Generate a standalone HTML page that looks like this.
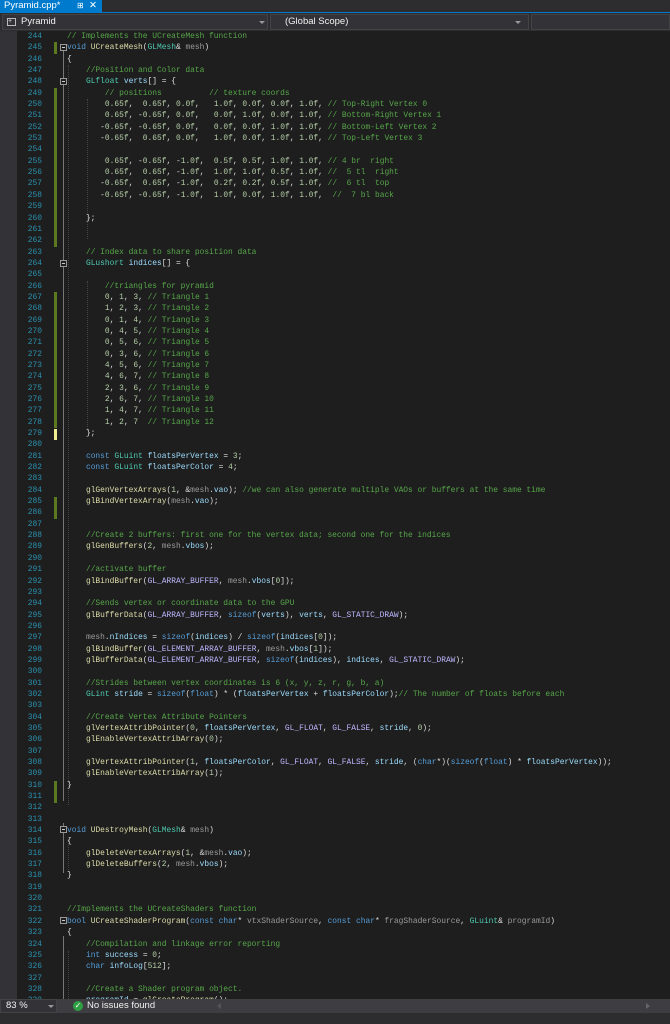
<!DOCTYPE html>
<html><head><meta charset="utf-8">
<style>
*{margin:0;padding:0;box-sizing:border-box}
body{width:670px;height:1024px;overflow:hidden;background:#1e1e1e;font-family:"Liberation Sans",sans-serif;position:relative}
#tabbar{position:absolute;left:0;top:0;width:670px;height:12px;background:#2d2d30}
#tab{position:absolute;left:0;top:0;width:102px;height:12px;background:#007acc;color:#fff;font-size:9.5px;line-height:12px;padding-left:4px}
#tab span{position:absolute;top:0}
#blue{position:absolute;left:0;top:12px;width:670px;height:1px;background:#007acc}
#nav{position:absolute;left:0;top:13px;width:670px;height:18px;background:#2d2d30}
.dd{position:absolute;top:1px;height:16px;background:#333337;border:1px solid #434346;color:#f1f1f1;font-size:9.5px;line-height:14px}
.arr{position:absolute;top:6px;width:0;height:0;border-left:3px solid transparent;border-right:3px solid transparent;border-top:3px solid #999}
#gut{position:absolute;left:0;top:31px;width:17px;height:968px;background:#333337}
#code{position:absolute;left:0;top:31px;width:670px;height:968px;overflow:hidden;font-family:"Liberation Mono",monospace;font-size:7.9px}
.l{height:11.357px;line-height:11.357px;position:relative;white-space:pre;color:#dcdcdc}
.n{position:absolute;left:17px;width:25px;text-align:right;color:#2b91af}
.c{position:absolute;left:67px}
.k{color:#569cd6}.t{color:#4ec9b0}.f{color:#dcdcaa}.v{color:#9cdcfe}.m{color:#57a64a}.p{color:#9a9a9a}.o{color:#beb7ff}.u{color:#b5cea8}
.bar{position:absolute;left:54px;width:3px;background:#5b7a1f}
.fold{position:absolute;left:60px;width:7px;height:7px;border:1px solid #999;background:#1e1e1e}
.fold:after{content:"";position:absolute;left:1px;top:2px;width:3px;height:1px;background:#ccc}
.vl{position:absolute;left:63px;width:1px;background:#777}
.ig{position:absolute;border-left:1px dotted #444}
#status{position:absolute;left:0;top:999px;width:670px;height:14px;background:#3e3e42;color:#f1f1f1;font-size:9.5px;line-height:14px}
#bottom{position:absolute;left:0;top:1013px;width:670px;height:11px;background:#2d2d30}
</style></head><body>
<div id="tabbar"><div id="tab"><span style="left:4px">Pyramid.cpp*</span><span style="left:77px;font-size:8px">&#8862;</span><span style="left:89px">✕</span></div></div>
<div id="blue"></div>
<div id="nav">
<div class="dd" style="left:2px;width:266px;padding-left:18px"><span style="position:absolute;left:4px;top:3px;width:9px;height:8px;border:1px solid #bbb;font-size:7px;line-height:6px;color:#ddd">+</span>Pyramid<div class="arr" style="left:256px"></div></div>
<div class="dd" style="left:270px;width:259px;padding-left:14px">(Global Scope)<div class="arr" style="left:244px"></div></div>
<div class="dd" style="left:531px;width:139px"></div>
</div>
<div id="gut"></div>
<div id="code">
<div class="bar" style="top:11.36px;height:11.36px"></div>
<div class="bar" style="top:56.8px;height:159px"></div>
<div class="bar" style="top:261.2px;height:136.3px"></div>
<div class="bar" style="top:397.5px;height:11.36px;background:#efef91"></div>
<div class="bar" style="top:465.6px;height:22.7px"></div>
<div class="bar" style="top:749.6px;height:22.7px"></div>
<div class="vl" style="top:20px;height:750px"></div>
<div class="vl" style="top:792px;height:50px"></div>
<div class="vl" style="top:905px;height:70px"></div>
<div class="ig" style="left:68px;top:34px;height:740px"></div>
<div class="ig" style="left:87px;top:68px;height:140px"></div>
<div class="ig" style="left:87px;top:250px;height:150px"></div>
<div class="ig" style="left:68px;top:806px;height:35px"></div>
<div class="ig" style="left:68px;top:920px;height:60px"></div>
<div class="fold" style="top:13px"></div>
<div class="fold" style="top:47px"></div>
<div class="fold" style="top:229px"></div>
<div class="fold" style="top:795px"></div>
<div class="fold" style="top:886px"></div>
<div class="l"><span class="n">244</span><span class="c"><span class="m">// Implements the UCreateMesh function</span></span></div>
<div class="l"><span class="n">245</span><span class="c"><span class="k">void</span> <span class="f">UCreateMesh</span>(<span class="t">GLMesh</span>&amp; <span class="p">mesh</span>)</span></div>
<div class="l"><span class="n">246</span><span class="c">{</span></div>
<div class="l"><span class="n">247</span><span class="c">    <span class="m">//Position and Color data</span></span></div>
<div class="l"><span class="n">248</span><span class="c">    <span class="t">GLfloat</span> <span class="v">verts</span>[] = {</span></div>
<div class="l"><span class="n">249</span><span class="c">        <span class="m">// positions          // texture coords</span></span></div>
<div class="l"><span class="n">250</span><span class="c">        <span class="u">0.65f</span>,  <span class="u">0.65f</span>, <span class="u">0.0f</span>,   <span class="u">1.0f</span>, <span class="u">0.0f</span>, <span class="u">0.0f</span>, <span class="u">1.0f</span>, <span class="m">// Top-Right Vertex 0</span></span></div>
<div class="l"><span class="n">251</span><span class="c">        <span class="u">0.65f</span>, -<span class="u">0.65f</span>, <span class="u">0.0f</span>,   <span class="u">0.0f</span>, <span class="u">1.0f</span>, <span class="u">0.0f</span>, <span class="u">1.0f</span>, <span class="m">// Bottom-Right Vertex 1</span></span></div>
<div class="l"><span class="n">252</span><span class="c">       -<span class="u">0.65f</span>, -<span class="u">0.65f</span>, <span class="u">0.0f</span>,   <span class="u">0.0f</span>, <span class="u">0.0f</span>, <span class="u">1.0f</span>, <span class="u">1.0f</span>, <span class="m">// Bottom-Left Vertex 2</span></span></div>
<div class="l"><span class="n">253</span><span class="c">       -<span class="u">0.65f</span>,  <span class="u">0.65f</span>, <span class="u">0.0f</span>,   <span class="u">1.0f</span>, <span class="u">0.0f</span>, <span class="u">1.0f</span>, <span class="u">1.0f</span>, <span class="m">// Top-Left Vertex 3</span></span></div>
<div class="l"><span class="n">254</span></div>
<div class="l"><span class="n">255</span><span class="c">        <span class="u">0.65f</span>, -<span class="u">0.65f</span>, -<span class="u">1.0f</span>,  <span class="u">0.5f</span>, <span class="u">0.5f</span>, <span class="u">1.0f</span>, <span class="u">1.0f</span>, <span class="m">// 4 br  right</span></span></div>
<div class="l"><span class="n">256</span><span class="c">        <span class="u">0.65f</span>,  <span class="u">0.65f</span>, -<span class="u">1.0f</span>,  <span class="u">1.0f</span>, <span class="u">1.0f</span>, <span class="u">0.5f</span>, <span class="u">1.0f</span>, <span class="m">//  5 tl  right</span></span></div>
<div class="l"><span class="n">257</span><span class="c">       -<span class="u">0.65f</span>,  <span class="u">0.65f</span>, -<span class="u">1.0f</span>,  <span class="u">0.2f</span>, <span class="u">0.2f</span>, <span class="u">0.5f</span>, <span class="u">1.0f</span>, <span class="m">//  6 tl  top</span></span></div>
<div class="l"><span class="n">258</span><span class="c">       -<span class="u">0.65f</span>, -<span class="u">0.65f</span>, -<span class="u">1.0f</span>,  <span class="u">1.0f</span>, <span class="u">0.0f</span>, <span class="u">1.0f</span>, <span class="u">1.0f</span>,  <span class="m">//  7 bl back</span></span></div>
<div class="l"><span class="n">259</span></div>
<div class="l"><span class="n">260</span><span class="c">    };</span></div>
<div class="l"><span class="n">261</span></div>
<div class="l"><span class="n">262</span></div>
<div class="l"><span class="n">263</span><span class="c">    <span class="m">// Index data to share position data</span></span></div>
<div class="l"><span class="n">264</span><span class="c">    <span class="t">GLushort</span> <span class="v">indices</span>[] = {</span></div>
<div class="l"><span class="n">265</span></div>
<div class="l"><span class="n">266</span><span class="c">        <span class="m">//triangles for pyramid</span></span></div>
<div class="l"><span class="n">267</span><span class="c">        <span class="u">0</span>, <span class="u">1</span>, <span class="u">3</span>, <span class="m">// Triangle 1</span></span></div>
<div class="l"><span class="n">268</span><span class="c">        <span class="u">1</span>, <span class="u">2</span>, <span class="u">3</span>, <span class="m">// Triangle 2</span></span></div>
<div class="l"><span class="n">269</span><span class="c">        <span class="u">0</span>, <span class="u">1</span>, <span class="u">4</span>, <span class="m">// Triangle 3</span></span></div>
<div class="l"><span class="n">270</span><span class="c">        <span class="u">0</span>, <span class="u">4</span>, <span class="u">5</span>, <span class="m">// Triangle 4</span></span></div>
<div class="l"><span class="n">271</span><span class="c">        <span class="u">0</span>, <span class="u">5</span>, <span class="u">6</span>, <span class="m">// Triangle 5</span></span></div>
<div class="l"><span class="n">272</span><span class="c">        <span class="u">0</span>, <span class="u">3</span>, <span class="u">6</span>, <span class="m">// Triangle 6</span></span></div>
<div class="l"><span class="n">273</span><span class="c">        <span class="u">4</span>, <span class="u">5</span>, <span class="u">6</span>, <span class="m">// Triangle 7</span></span></div>
<div class="l"><span class="n">274</span><span class="c">        <span class="u">4</span>, <span class="u">6</span>, <span class="u">7</span>, <span class="m">// Triangle 8</span></span></div>
<div class="l"><span class="n">275</span><span class="c">        <span class="u">2</span>, <span class="u">3</span>, <span class="u">6</span>, <span class="m">// Triangle 9</span></span></div>
<div class="l"><span class="n">276</span><span class="c">        <span class="u">2</span>, <span class="u">6</span>, <span class="u">7</span>, <span class="m">// Triangle 10</span></span></div>
<div class="l"><span class="n">277</span><span class="c">        <span class="u">1</span>, <span class="u">4</span>, <span class="u">7</span>, <span class="m">// Triangle 11</span></span></div>
<div class="l"><span class="n">278</span><span class="c">        <span class="u">1</span>, <span class="u">2</span>, <span class="u">7</span>  <span class="m">// Triangle 12</span></span></div>
<div class="l"><span class="n">279</span><span class="c">    };</span></div>
<div class="l"><span class="n">280</span></div>
<div class="l"><span class="n">281</span><span class="c">    <span class="k">const</span> <span class="t">GLuint</span> <span class="v">floatsPerVertex</span> = <span class="u">3</span>;</span></div>
<div class="l"><span class="n">282</span><span class="c">    <span class="k">const</span> <span class="t">GLuint</span> <span class="v">floatsPerColor</span> = <span class="u">4</span>;</span></div>
<div class="l"><span class="n">283</span></div>
<div class="l"><span class="n">284</span><span class="c">    <span class="f">glGenVertexArrays</span>(<span class="u">1</span>, &amp;<span class="p">mesh</span>.<span class="v">vao</span>); <span class="m">//we can also generate multiple VAOs or buffers at the same time</span></span></div>
<div class="l"><span class="n">285</span><span class="c">    <span class="f">glBindVertexArray</span>(<span class="p">mesh</span>.<span class="v">vao</span>);</span></div>
<div class="l"><span class="n">286</span></div>
<div class="l"><span class="n">287</span></div>
<div class="l"><span class="n">288</span><span class="c">    <span class="m">//Create 2 buffers: first one for the vertex data; second one for the indices</span></span></div>
<div class="l"><span class="n">289</span><span class="c">    <span class="f">glGenBuffers</span>(<span class="u">2</span>, <span class="p">mesh</span>.<span class="v">vbos</span>);</span></div>
<div class="l"><span class="n">290</span></div>
<div class="l"><span class="n">291</span><span class="c">    <span class="m">//activate buffer</span></span></div>
<div class="l"><span class="n">292</span><span class="c">    <span class="f">glBindBuffer</span>(<span class="o">GL_ARRAY_BUFFER</span>, <span class="p">mesh</span>.<span class="v">vbos</span>[<span class="u">0</span>]);</span></div>
<div class="l"><span class="n">293</span></div>
<div class="l"><span class="n">294</span><span class="c">    <span class="m">//Sends vertex or coordinate data to the GPU</span></span></div>
<div class="l"><span class="n">295</span><span class="c">    <span class="f">glBufferData</span>(<span class="o">GL_ARRAY_BUFFER</span>, <span class="k">sizeof</span>(<span class="v">verts</span>), <span class="v">verts</span>, <span class="o">GL_STATIC_DRAW</span>);</span></div>
<div class="l"><span class="n">296</span></div>
<div class="l"><span class="n">297</span><span class="c">    <span class="p">mesh</span>.<span class="v">nIndices</span> = <span class="k">sizeof</span>(<span class="v">indices</span>) / <span class="k">sizeof</span>(<span class="v">indices</span>[<span class="u">0</span>]);</span></div>
<div class="l"><span class="n">298</span><span class="c">    <span class="f">glBindBuffer</span>(<span class="o">GL_ELEMENT_ARRAY_BUFFER</span>, <span class="p">mesh</span>.<span class="v">vbos</span>[<span class="u">1</span>]);</span></div>
<div class="l"><span class="n">299</span><span class="c">    <span class="f">glBufferData</span>(<span class="o">GL_ELEMENT_ARRAY_BUFFER</span>, <span class="k">sizeof</span>(<span class="v">indices</span>), <span class="v">indices</span>, <span class="o">GL_STATIC_DRAW</span>);</span></div>
<div class="l"><span class="n">300</span></div>
<div class="l"><span class="n">301</span><span class="c">    <span class="m">//Strides between vertex coordinates is 6 (x, y, z, r, g, b, a)</span></span></div>
<div class="l"><span class="n">302</span><span class="c">    <span class="t">GLint</span> <span class="v">stride</span> = <span class="k">sizeof</span>(<span class="k">float</span>) * (<span class="v">floatsPerVertex</span> + <span class="v">floatsPerColor</span>);<span class="m">// The number of floats before each</span></span></div>
<div class="l"><span class="n">303</span></div>
<div class="l"><span class="n">304</span><span class="c">    <span class="m">//Create Vertex Attribute Pointers</span></span></div>
<div class="l"><span class="n">305</span><span class="c">    <span class="f">glVertexAttribPointer</span>(<span class="u">0</span>, <span class="v">floatsPerVertex</span>, <span class="o">GL_FLOAT</span>, <span class="o">GL_FALSE</span>, <span class="v">stride</span>, <span class="u">0</span>);</span></div>
<div class="l"><span class="n">306</span><span class="c">    <span class="f">glEnableVertexAttribArray</span>(<span class="u">0</span>);</span></div>
<div class="l"><span class="n">307</span></div>
<div class="l"><span class="n">308</span><span class="c">    <span class="f">glVertexAttribPointer</span>(<span class="u">1</span>, <span class="v">floatsPerColor</span>, <span class="o">GL_FLOAT</span>, <span class="o">GL_FALSE</span>, <span class="v">stride</span>, (<span class="k">char</span>*)(<span class="k">sizeof</span>(<span class="k">float</span>) * <span class="v">floatsPerVertex</span>));</span></div>
<div class="l"><span class="n">309</span><span class="c">    <span class="f">glEnableVertexAttribArray</span>(<span class="u">1</span>);</span></div>
<div class="l"><span class="n">310</span><span class="c">}</span></div>
<div class="l"><span class="n">311</span></div>
<div class="l"><span class="n">312</span></div>
<div class="l"><span class="n">313</span></div>
<div class="l"><span class="n">314</span><span class="c"><span class="k">void</span> <span class="f">UDestroyMesh</span>(<span class="t">GLMesh</span>&amp; <span class="p">mesh</span>)</span></div>
<div class="l"><span class="n">315</span><span class="c">{</span></div>
<div class="l"><span class="n">316</span><span class="c">    <span class="f">glDeleteVertexArrays</span>(<span class="u">1</span>, &amp;<span class="p">mesh</span>.<span class="v">vao</span>);</span></div>
<div class="l"><span class="n">317</span><span class="c">    <span class="f">glDeleteBuffers</span>(<span class="u">2</span>, <span class="p">mesh</span>.<span class="v">vbos</span>);</span></div>
<div class="l"><span class="n">318</span><span class="c">}</span></div>
<div class="l"><span class="n">319</span></div>
<div class="l"><span class="n">320</span></div>
<div class="l"><span class="n">321</span><span class="c"><span class="m">//Implements the UCreateShaders function</span></span></div>
<div class="l"><span class="n">322</span><span class="c"><span class="k">bool</span> <span class="f">UCreateShaderProgram</span>(<span class="k">const</span> <span class="k">char</span>* <span class="p">vtxShaderSource</span>, <span class="k">const</span> <span class="k">char</span>* <span class="p">fragShaderSource</span>, <span class="t">GLuint</span>&amp; <span class="p">programId</span>)</span></div>
<div class="l"><span class="n">323</span><span class="c">{</span></div>
<div class="l"><span class="n">324</span><span class="c">    <span class="m">//Compilation and linkage error reporting</span></span></div>
<div class="l"><span class="n">325</span><span class="c">    <span class="k">int</span> <span class="v">success</span> = <span class="u">0</span>;</span></div>
<div class="l"><span class="n">326</span><span class="c">    <span class="k">char</span> <span class="v">infoLog</span>[<span class="u">512</span>];</span></div>
<div class="l"><span class="n">327</span></div>
<div class="l"><span class="n">328</span><span class="c">    <span class="m">//Create a Shader program object.</span></span></div>
<div class="l"><span class="n">329</span><span class="c">    <span class="v">programId</span> = <span class="f">glCreateProgram</span>();</span></div>
</div>
<div id="status">
<div style="position:absolute;left:0;top:0;width:57px;height:14px;background:#333337;border:1px solid #434346;padding-left:5px;line-height:12px">83 %<div class="arr" style="left:47px;top:5px"></div></div>
<div style="position:absolute;left:73px;top:2px;width:10px;height:10px;border-radius:50%;background:#2ea043;color:#fff;font-size:8px;line-height:10px;text-align:center">✓</div>
<div style="position:absolute;left:87px;top:0">No issues found</div>
<div style="position:absolute;left:217px;top:4px;width:0;height:0;border-top:3px solid transparent;border-bottom:3px solid transparent;border-right:4px solid #555"></div>
<div style="position:absolute;left:646px;top:4px;width:0;height:0;border-top:3px solid transparent;border-bottom:3px solid transparent;border-left:4px solid #666"></div>
</div>
<div id="bottom"></div>
</body></html>
